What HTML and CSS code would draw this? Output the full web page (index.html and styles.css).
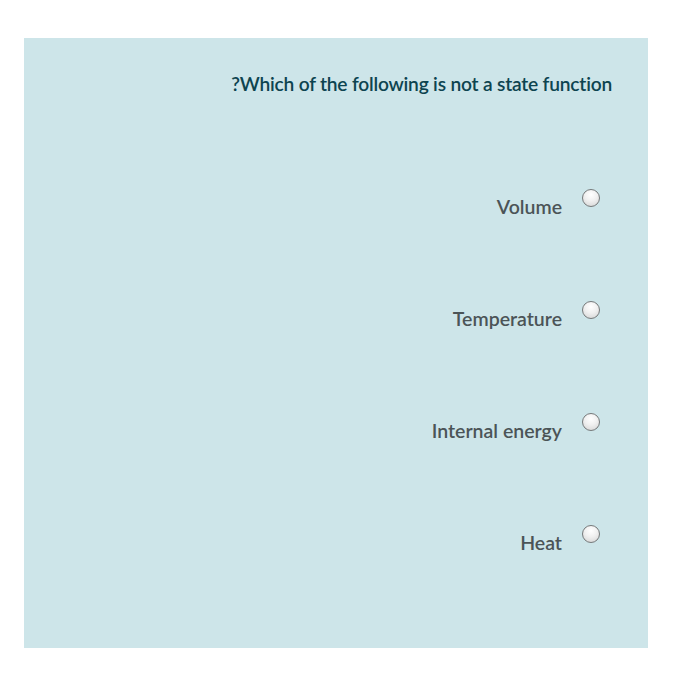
FILE: index.html
```html
<!DOCTYPE html>
<html>
<head>
<meta charset="utf-8">
<link rel="stylesheet" href="styles.css">
</head>
<body>
<div class="panel">
  <div class="question">?Which of the following is not a state function</div>
  <div class="options">
    <label class="option"><span class="label">Volume</span><span class="radio"></span></label>
    <label class="option"><span class="label">Temperature</span><span class="radio"></span></label>
    <label class="option"><span class="label">Internal energy</span><span class="radio"></span></label>
    <label class="option"><span class="label">Heat</span><span class="radio"></span></label>
  </div>
</div>
</body>
</html>
```
FILE: styles.css
```css
html, body {
  margin: 0;
  padding: 0;
  background: #ffffff;
}
body {
  font-family: Lato, "Open Sans", sans-serif;
}
.panel {
  margin: 38px 0 0 24px;
  width: 624px;
  height: 610px;
  box-sizing: border-box;
  background: #cde5e9;
  padding: 34px 36px 0 0;
  display: flex;
  flex-direction: column;
  align-items: flex-end;
}
.question {
  font-size: 19.2px;
  line-height: 24px;
  color: #0d4450;
  font-weight: 600;
  letter-spacing: -0.2px;
}
.options {
  margin-top: 99px;
  padding-right: 12px;
  display: flex;
  flex-direction: column;
  align-items: flex-end;
  gap: 88px;
}
.option {
  display: flex;
  align-items: flex-start;
  gap: 20px;
}
.label {
  font-size: 19.5px;
  line-height: 24px;
  color: #4b5457;
  font-weight: 600;
}
.radio {
  width: 16px;
  height: 16px;
  margin-top: -6px;
  border-radius: 50%;
  border: 1px solid #76797a;
  background: radial-gradient(circle at 50% 30%, #ffffff 0%, #f0f0f0 45%, #d2d2d2 100%);
}
```
